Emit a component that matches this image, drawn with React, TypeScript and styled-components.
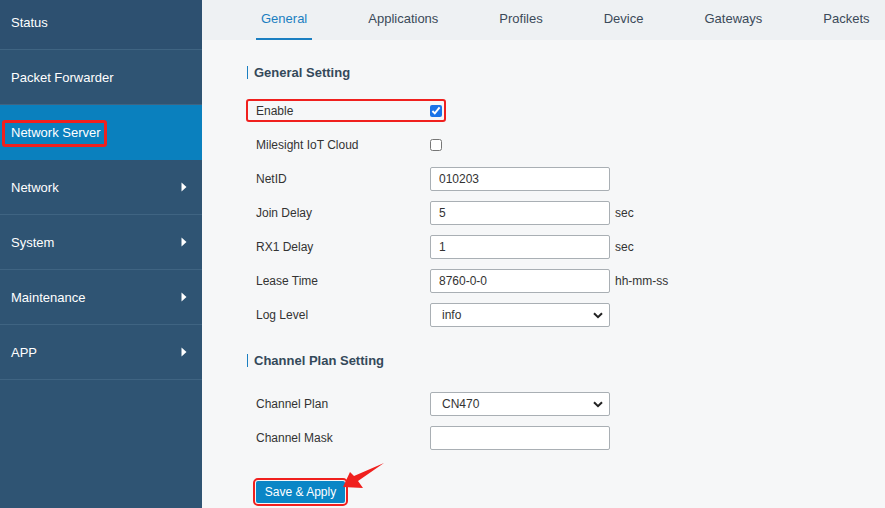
import * as React from 'react';
import styled, { createGlobalStyle } from 'styled-components';

const GlobalStyle = createGlobalStyle`
  html, body {
    margin: 0;
    padding: 0;
    height: 100%;
    overflow: hidden;
  }
  body {
    font-family: "Liberation Sans", Arial, sans-serif;
    background: #f6f7f8;
  }
`;

const menu = [
  { label: 'Status' },
  { label: 'Packet Forwarder' },
  { label: 'Network Server', active: true },
  { label: 'Network', sub: true },
  { label: 'System', sub: true },
  { label: 'Maintenance', sub: true },
  { label: 'APP', sub: true },
];

const tabs = ['General', 'Applications', 'Profiles', 'Device', 'Gateways', 'Packets'];

const Caret = () => (
  <svg width="6" height="10" viewBox="0 0 6 10">
    <path d="M0.5 0.5 L5.5 5 L0.5 9.5 Z" fill="#ffffff" />
  </svg>
);

const Chevron = () => (
  <svg width="10" height="7" viewBox="0 0 10 7">
    <path d="M1 1.2 L5 5.2 L9 1.2" fill="none" stroke="#222" strokeWidth="2" />
  </svg>
);

// red pointer drawn on the screenshot, aiming at the button
const Arrow = () => (
  <svg width="46" height="36" viewBox="0 0 46 36">
    <polygon points="3,32 10,17 14,21 44,8 18,26 23,33" fill="#f0201e" />
  </svg>
);

function App() {
  return (
    <Page>
      <GlobalStyle />
      <Sidebar>
        {menu.map((m) => (
          <MenuItem key={m.label} $active={!!m.active}>
            <span>{m.label}</span>
            {m.sub && <Caret />}
          </MenuItem>
        ))}
      </Sidebar>
      <Main>
        <TabBar>
          {tabs.map((t, i) => (
            <Tab key={t} $active={i === 0}>
              {t}
            </Tab>
          ))}
        </TabBar>
        <Content>
          <Heading>General Setting</Heading>
          <Rows>
            <Row $marked>
              <Label>Enable</Label>
              <Check type="checkbox" defaultChecked />
            </Row>
            <Row>
              <Label>Milesight IoT Cloud</Label>
              <Check type="checkbox" />
            </Row>
            <Row>
              <Label>NetID</Label>
              <Input defaultValue="010203" />
            </Row>
            <Row>
              <Label>Join Delay</Label>
              <Input defaultValue="5" />
              <Unit>sec</Unit>
            </Row>
            <Row>
              <Label>RX1 Delay</Label>
              <Input defaultValue="1" />
              <Unit>sec</Unit>
            </Row>
            <Row>
              <Label>Lease Time</Label>
              <Input defaultValue="8760-0-0" />
              <Unit>hh-mm-ss</Unit>
            </Row>
            <Row>
              <Label>Log Level</Label>
              <SelectWrap>
                <Select defaultValue="info">
                  <option value="info">info</option>
                </Select>
                <Chevron />
              </SelectWrap>
            </Row>
          </Rows>
          <Heading $second>Channel Plan Setting</Heading>
          <Rows>
            <Row>
              <Label>Channel Plan</Label>
              <SelectWrap>
                <Select defaultValue="CN470">
                  <option value="CN470">CN470</option>
                </Select>
                <Chevron />
              </SelectWrap>
            </Row>
            <Row>
              <Label>Channel Mask</Label>
              <Input defaultValue="" />
            </Row>
          </Rows>
          <Footer>
            <SaveButton>Save &amp; Apply</SaveButton>
            <ArrowMark>
              <Arrow />
            </ArrowMark>
          </Footer>
        </Content>
      </Main>
    </Page>
  );
}

const Page = styled.div`
  display: flex;
  width: 885px;
  height: 508px;
  overflow: hidden;
`;

const Sidebar = styled.nav`
  width: 202px;
  flex-shrink: 0;
  background: #2f5473;
  display: flex;
  flex-direction: column;
  margin-top: -5px;
`;

const MenuItem = styled.div<{ $active: boolean }>`
  position: relative;
  height: 54px;
  border-bottom: 1px solid ${(p) => (p.$active ? '#0a80be' : '#3f6482')};
  background: ${(p) => (p.$active ? '#0a80be' : 'transparent')};
  display: flex;
  align-items: center;
  justify-content: space-between;
  padding: 0 15px 0 11px;
  color: #ffffff;
  font-size: 13px;

  &:first-child {
    background: #2d5070;
  }

  ${(p) =>
    p.$active &&
    `
    &::after {
      content: '';
      position: absolute;
      left: 2px;
      top: 15px;
      width: 99px;
      height: 21px;
      border: 3px solid #f0201e;
      border-radius: 3px;
    }
  `}
`;

const Main = styled.main`
  flex: 1;
  display: flex;
  flex-direction: column;
  background: #f6f7f8;
  min-width: 0;
`;

const TabBar = styled.div`
  height: 40px;
  background: #eef1f3;
  display: flex;
  align-items: stretch;
  gap: 51px;
  padding-left: 54px;
  white-space: nowrap;
`;

const Tab = styled.div<{ $active: boolean }>`
  display: flex;
  align-items: center;
  padding: 0 5px 2px;
  font-size: 13px;
  color: ${(p) => (p.$active ? '#1b7fc1' : '#3b4a59')};
  border-bottom: 2px solid ${(p) => (p.$active ? '#1b7fc1' : 'transparent')};
`;

const Content = styled.div`
  padding: 22px 0 0 44px;
  display: flex;
  flex-direction: column;
`;

const Heading = styled.h3<{ $second?: boolean }>`
  margin: ${(p) => (p.$second ? '18px 0 17px' : '0 0 12px')};
  display: flex;
  align-items: center;
  height: 20px;
  font-size: 13px;
  font-weight: 700;
  color: #34495a;

  &::before {
    content: '';
    width: 1px;
    height: 13px;
    background: #1b7fc1;
    margin: 0 6px 0 1px;
  }
`;

const Rows = styled.div`
  display: flex;
  flex-direction: column;
`;

const Row = styled.div<{ $marked?: boolean }>`
  position: relative;
  height: 34px;
  display: flex;
  align-items: center;
  padding-left: 10px;

  ${(p) =>
    p.$marked &&
    `
    &::after {
      content: '';
      position: absolute;
      left: 0;
      top: 5px;
      width: 196px;
      height: 19px;
      border: 2.5px solid #f0201e;
      border-radius: 3px;
    }
  `}
`;

const Label = styled.span`
  width: 174px;
  font-size: 12px;
  color: #333333;
`;

const Check = styled.input`
  margin: 0;
  width: 12px;
  height: 12px;
  accent-color: #1a73e8;
`;

const Input = styled.input`
  box-sizing: border-box;
  width: 180px;
  height: 24px;
  border: 1px solid #a9afb4;
  border-radius: 2px;
  background: #ffffff;
  padding: 0 8px;
  font-family: inherit;
  font-size: 12px;
  color: #333333;
  outline: none;
`;

const Unit = styled.span`
  margin-left: 5px;
  font-size: 12px;
  color: #333333;
`;

const SelectWrap = styled.div`
  position: relative;
  width: 180px;
  height: 24px;

  svg {
    position: absolute;
    right: 7px;
    top: 9px;
    pointer-events: none;
  }
`;

const Select = styled.select`
  appearance: none;
  box-sizing: border-box;
  width: 100%;
  height: 100%;
  border: 1px solid #a9afb4;
  border-radius: 2px;
  background: #ffffff;
  padding: 0 11px;
  font-family: inherit;
  font-size: 12px;
  color: #333333;
  outline: none;
`;

const Footer = styled.div`
  display: flex;
  align-items: flex-start;
  margin-top: 26px;
  padding-left: 10px;
`;

const SaveButton = styled.button`
  width: 89px;
  height: 22px;
  border: none;
  border-radius: 2px;
  background: #0a86c6;
  color: #ffffff;
  font-family: inherit;
  font-size: 12px;
  padding: 0;
  outline: 2.5px solid #f0201e;
  outline-offset: 1px;
`;

const ArrowMark = styled.div`
  margin: -26px 0 0 -5px;
  height: 36px;
`;

export default App;
